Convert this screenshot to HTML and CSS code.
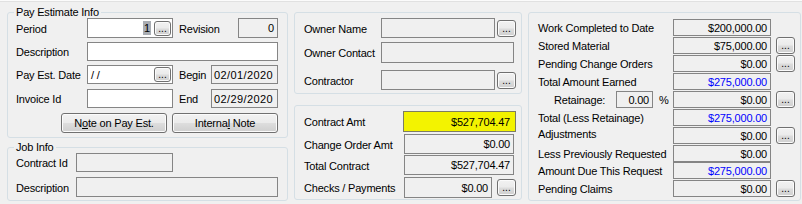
FILE: index.html
```html
<!DOCTYPE html>
<html>
<head>
<meta charset="utf-8">
<title>Pay Estimate</title>
<link rel="stylesheet" href="styles.css">
</head>
<body>
<div class="page">
  <div class="col col1">
    <div class="group g-pay">
      <div class="legend">Pay Estimate Info</div>
      <div class="row r-period">
        <span class="lbl w71">Period</span>
        <div class="box edit w86 with-btn num"><span class="sel">1</span><span class="dots in">...</span></div>
        <span class="lbl lbl2 w59">Revision</span>
        <div class="box ro w40 num">0</div>
      </div>
      <div class="row r-desc">
        <span class="lbl w71">Description</span>
        <div class="box edit w191"></div>
      </div>
      <div class="row r-date">
        <span class="lbl w71">Pay Est. Date</span>
        <div class="box edit w86 with-btn"><span class="fill">/ /</span><span class="dots in">...</span></div>
        <span class="lbl lbl2 w32">Begin</span>
        <div class="box ro w67 date">02/01/2020</div>
      </div>
      <div class="row r-inv">
        <span class="lbl w71">Invoice Id</span>
        <div class="box edit w86"></div>
        <span class="lbl lbl2 w32">End</span>
        <div class="box ro w67 date">02/29/2020</div>
      </div>
      <div class="row r-btns">
        <div class="btn">N<u>o</u>te on Pay Est.</div>
        <div class="btn">Interna<u>l</u> Note</div>
      </div>
    </div>
    <div class="group g-job">
      <div class="legend">Job Info</div>
      <div class="row r-cid">
        <span class="lbl w60">Contract Id</span>
        <div class="box ro w97"></div>
      </div>
      <div class="row r-jdesc">
        <span class="lbl w60">Description</span>
        <div class="box ro w202"></div>
      </div>
    </div>
  </div>

  <div class="col col2">
    <div class="group g-owner">
      <div class="row r-o1">
        <span class="lbl w77">Owner Name</span>
        <div class="box ro w114"></div>
        <span class="dots side2">...</span>
      </div>
      <div class="row r-o2">
        <span class="lbl w77">Owner Contact</span>
        <div class="box ro w133"></div>
      </div>
      <div class="row r-o3">
        <span class="lbl w77">Contractor</span>
        <div class="box ro w114"></div>
        <span class="dots side2">...</span>
      </div>
    </div>
    <div class="group g-contract">
      <div class="row r-c1">
        <span class="lbl w99">Contract Amt</span>
        <div class="box yellow w113 num">$527,704.47</div>
      </div>
      <div class="row r-c2">
        <span class="lbl w99">Change Order Amt</span>
        <div class="box ro w110 shift num">$0.00</div>
      </div>
      <div class="row r-c3">
        <span class="lbl w99">Total Contract</span>
        <div class="box ro w110 shift num">$527,704.47</div>
      </div>
      <div class="row r-c4">
        <span class="lbl w99">Checks / Payments</span>
        <div class="box ro w88 shift num">$0.00</div>
        <span class="dots side5">...</span>
      </div>
    </div>
  </div>

  <div class="col col3">
    <div class="group g-sum">
      <div class="row srow">
        <span class="lbl w135">Work Completed to Date</span>
        <div class="box ro w98 num">$200,000.00</div>
      </div>
      <div class="row srow">
        <span class="lbl w135">Stored Material</span>
        <div class="box ro w98 num">$75,000.00</div>
        <span class="dots side5">...</span>
      </div>
      <div class="row srow">
        <span class="lbl w135">Pending Change Orders</span>
        <div class="box ro w98 num">$0.00</div>
        <span class="dots side5">...</span>
      </div>
      <div class="row srow">
        <span class="lbl w135">Total Amount Earned</span>
        <div class="box ro w98 num blue">$275,000.00</div>
      </div>
      <div class="row srow">
        <span class="lbl ret-lbl">Retainage:</span>
        <div class="box ro w37 num">0.00</div>
        <span class="lbl pct">%</span>
        <div class="box ro w98 num">$0.00</div>
        <span class="dots side5">...</span>
      </div>
      <div class="row srow">
        <span class="lbl w135">Total (Less Retainage)</span>
        <div class="box ro w98 num blue">$275,000.00</div>
      </div>
      <div class="row srow">
        <span class="lbl w135 up">Adjustments</span>
        <div class="box ro w98 num">$0.00</div>
        <span class="dots side5">...</span>
      </div>
      <div class="row srow">
        <span class="lbl w135">Less Previously Requested</span>
        <div class="box ro w98 num">$0.00</div>
      </div>
      <div class="row srow tight">
        <span class="lbl w135">Amount Due This Request</span>
        <div class="box ro w98 num blue">$275,000.00</div>
      </div>
      <div class="row srow">
        <span class="lbl w135">Pending Claims</span>
        <div class="box ro w98 num">$0.00</div>
        <span class="dots side5">...</span>
      </div>
    </div>
  </div>
</div>
</body>
</html>
```

FILE: styles.css
```css
* { box-sizing: border-box; }

html, body {
  margin: 0;
  padding: 0;
  background: #f0f0f0;
}

body {
  width: 802px;
  height: 204px;
  overflow: hidden;
  font-family: "Liberation Sans", Arial, sans-serif;
  font-size: 11px;
  letter-spacing: -0.2px;
  color: #000;
  box-shadow: inset 0 1px 0 #fbfbfb, inset 0 2px 0 #e1e1e1;
}

.page {
  display: flex;
  align-items: flex-start;
  gap: 6px;
  padding: 12px 0 0 7px;
}

.col { display: flex; flex-direction: column; }
.col1 { width: 281px; }
.col2 { width: 228px; }
.col3 { width: 273px; }

.group {
  border: 1px solid #d5dfe5;
  border-radius: 3px;
}

.legend {
  width: max-content;
  height: 12px;
  line-height: 12px;
  margin: -7px 0 0 -2px;
  padding: 0 2px;
  background: #f0f0f0;
}

.row {
  display: flex;
  align-items: center;
}

.lbl {
  flex: none;
  white-space: nowrap;
  padding-top: 1px;
}
.lbl2 { margin-left: 6px; }

.w32 { width: 32px; }
.w59 { width: 59px; }
.w60 { width: 60px; }
.w71 { width: 71px; }
.w77 { width: 77px; }
.w99 { width: 99px; }
.w135 { width: 135px; }

.box {
  flex: none;
  height: 100%;
  display: flex;
  align-items: center;
  white-space: nowrap;
  overflow: hidden;
  border: 1px solid #858585;
  padding: 0 3px;
}
.edit { background: #fff; }
.ro { background: #f0f0f0; }
.yellow { background: #f3f300; border-color: #7d7d62; padding-right: 5px; }
.num { justify-content: flex-end; }
.blue { color: #0000ff; }
.date { letter-spacing: 0.4px; padding-left: 2px; }
.shift { margin-left: 1px; }

.w37 { width: 37px; }
.w40 { width: 40px; }
.w67 { width: 67px; }
.w86 { width: 86px; }
.w88 { width: 88px; }
.w97 { width: 97px; }
.w98 { width: 98px; }
.w110 { width: 110px; }
.w113 { width: 113px; }
.w114 { width: 114px; }
.w133 { width: 133px; }
.w191 { width: 191px; }
.w202 { width: 202px; }

.with-btn { padding-right: 1px; }
.fill { flex: 1; padding-left: 0; }
.sel {
  background: #a9adb3;
  padding: 0 1px;
  line-height: 14px;
}

.dots {
  flex: none;
  width: 19px;
  height: 17px;
  display: flex;
  align-items: flex-end;
  justify-content: center;
  padding-bottom: 2px;
  font-size: 10px;
  line-height: 10px;
  letter-spacing: 0;
  border: 1px solid #707070;
  border-radius: 3px;
  background: linear-gradient(#f2f2f2 0%, #ebebeb 48%, #dddddd 52%, #cfcfcf 100%);
  box-shadow: inset 0 0 0 1px #fbfbfb;
}
.dots.in { width: 17px; height: 15px; margin-left: 3px; padding-bottom: 1px; }
.side2 { margin-left: 2px; }
.side5 { margin-left: 5px; }

.btn {
  flex: none;
  width: 106px;
  height: 20px;
  line-height: 18px;
  text-align: center;
  border: 1px solid #707070;
  border-radius: 3px;
  background: linear-gradient(#f2f2f2 0%, #ebebeb 48%, #dddddd 52%, #cfcfcf 100%);
  box-shadow: inset 0 0 0 1px #fbfbfb;
}

/* Pay Estimate Info */
.g-pay { height: 126px; padding: 0 9px 0 8px; }
.r-period { height: 20px; }
.r-desc { height: 19px; margin-top: 4px; }
.r-date { height: 19px; margin-top: 4px; }
.r-inv { height: 19px; margin-top: 5px; }
.r-btns { height: 20px; margin-top: 5px; justify-content: flex-end; gap: 5px; }

/* Job Info */
.g-job { height: 54px; margin-top: 9px; padding: 0 9px 0 8px; }
.r-cid { height: 19px; }
.r-jdesc { height: 20px; margin-top: 5px; }

/* Owner */
.g-owner { height: 82px; padding: 5px 5px 0 9px; }
.r-o1 { height: 20px; }
.r-o2 { height: 21px; margin-top: 4px; }
.r-o3 { height: 20px; margin-top: 7px; }

/* Contract */
.g-contract { height: 95px; margin-top: 11px; padding: 5px 5px 0 9px; }
.r-c1 { height: 21px; }
.r-c2 { height: 20px; margin-top: 2px; }
.r-c3 { height: 20px; margin-top: 1px; }
.r-c4 { height: 21px; margin-top: 2px; }

/* Summary */
.g-sum { height: 189px; padding: 6px 5px 0 9px; }
.srow { height: 17px; margin-top: 1px; }
.srow:first-child { margin-top: 0; }
.srow.tight { margin-top: 0; }
.up { padding-top: 0; margin-top: -3px; }
.ret-lbl { width: 78px; padding-left: 16px; }
.pct { width: 20px; padding-left: 6px; }
```
